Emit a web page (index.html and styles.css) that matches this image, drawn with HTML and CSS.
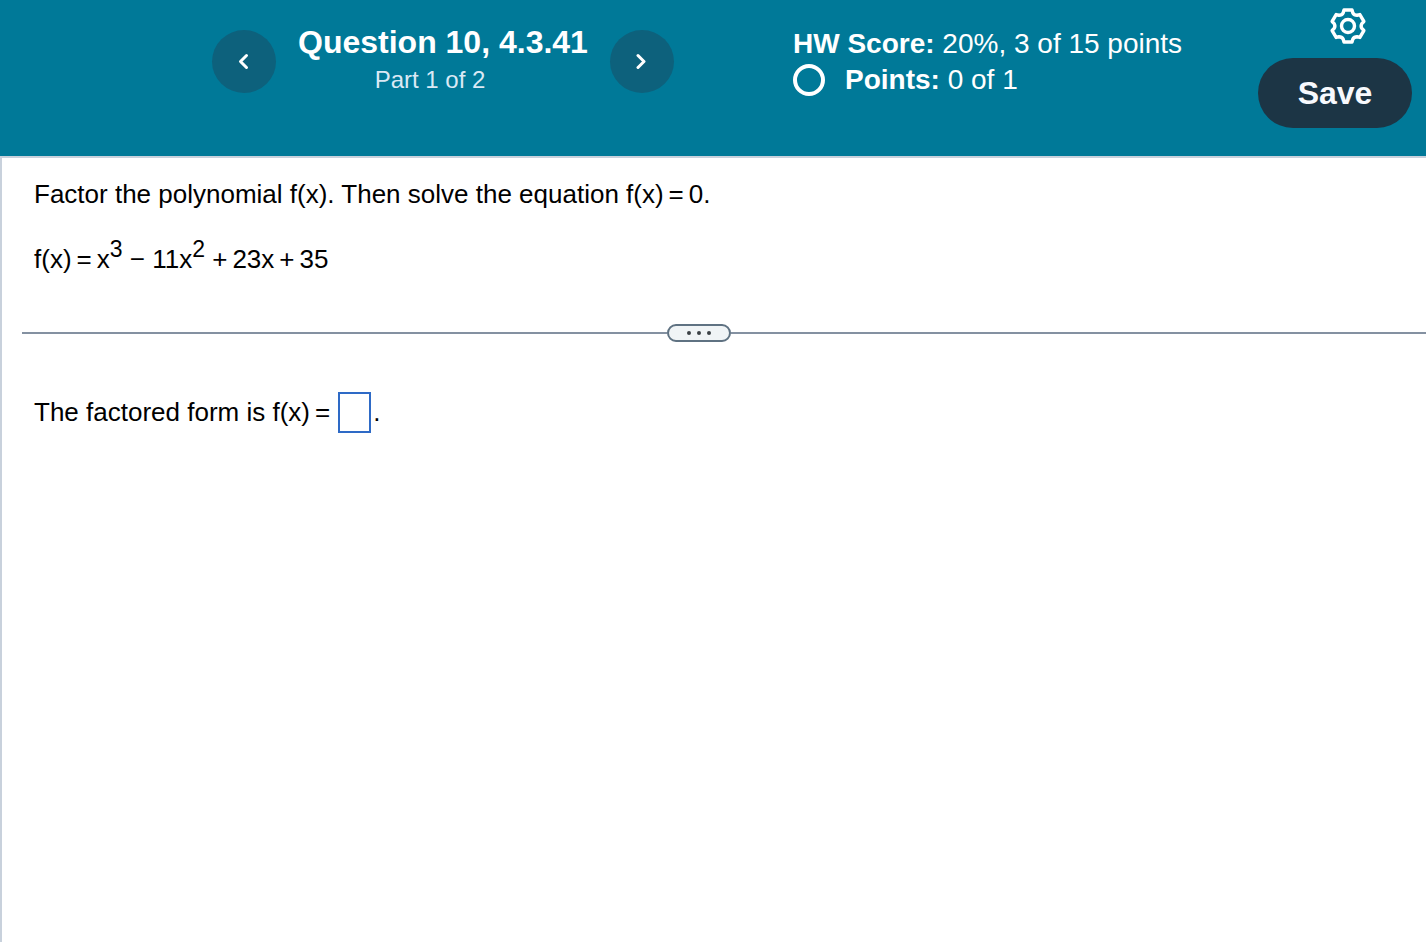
FILE: index.html
```
<!DOCTYPE html>
<html lang="en">
<head>
    <meta charset="UTF-8">
    <meta name="viewport" content="width=device-width, initial-scale=1.0">
    <title>Question 10, 4.3.41</title>
    <link rel="stylesheet" href="styles.css">
</head>
<body>
    <!-- Top bar -->
    <header class="header">
        <nav class="question-nav">
            <button type="button" class="nav-button" aria-label="Previous question">
                <svg width="12" height="18" viewBox="0 0 12 18"><path d="M8.5 2.5L2.5 8.5L8.5 14.5"/></svg>
            </button>
            <div class="question-title">
                <h1>Question 10, 4.3.41</h1>
                <p>Part 1 of 2</p>
            </div>
            <button type="button" class="nav-button" aria-label="Next question">
                <svg width="12" height="18" viewBox="0 0 12 18"><path d="M2 2.5L8 8.5L2 14.5"/></svg>
            </button>
        </nav>

        <div class="score">
            <p><strong>HW Score:</strong> 20%, 3 of 15 points</p>
            <p class="points"><span class="points-status"></span><span><strong>Points:</strong> 0 of 1</span></p>
        </div>

        <div class="actions">
            <button type="button" class="settings-button" aria-label="Settings">
                <svg width="36" height="36" viewBox="-18 -18 36 36">
                    <path d="M-4 -16H4L4.8 -13.2Q6.2 -10.74 9.03 -10.76L11.86 -11.46L15.86 -4.54L13.83 -2.44Q12.4 0 13.83 2.44L15.86 4.54L11.86 11.46L9.03 10.76Q6.2 10.74 4.8 13.2L4 16H-4L-4.8 13.2Q-6.2 10.74 -9.03 10.76L-11.86 11.46L-15.86 4.54L-13.83 2.44Q-12.4 0 -13.83 -2.44L-15.86 -4.54L-11.86 -11.46L-9.03 -10.76Q-6.2 -10.74 -4.8 -13.2Z"/>
                    <circle r="6.5"/>
                </svg>
            </button>
            <button type="button" class="save-button">Save</button>
        </div>
    </header>

    <!-- Exercise -->
    <main class="exercise">
        <section class="problem">
            <p>Factor the polynomial f(x). Then solve the equation f(x)<span class="op">=</span>0.</p>
            <p>f(x)<span class="op">=</span>x<sup>3</sup> − 11x<sup>2</sup> <span class="plus">+</span>23x<span class="op">+</span>35</p>
        </section>

        <div class="divider">
            <button type="button" class="divider-handle" aria-label="Resize">
                <svg width="26" height="6" viewBox="0 0 26 6">
                    <circle cx="3" cy="3" r="2"/>
                    <circle cx="13" cy="3" r="2"/>
                    <circle cx="23" cy="3" r="2"/>
                </svg>
            </button>
        </div>

        <form class="answer">
            <label for="answer">The factored form is f(x)<span class="op">=</span></label>
            <input type="text" id="answer" autocomplete="off">
            <span>.</span>
        </form>
    </main>
</body>
</html>
```
FILE: styles.css
```
* {
    box-sizing: border-box;
}

body {
    margin: 0;
    min-height: 100vh;
    display: flex;
    flex-direction: column;
    font-family: "Liberation Sans", Arial, sans-serif;
    font-size: 26px;
    color: #000;
    background-color: #fff;
}

h1, p {
    margin: 0;
}

button {
    border: none;
    padding: 0;
    font-family: inherit;
    cursor: pointer;
}

/* Top bar */
.header {
    display: flex;
    align-items: flex-start;
    min-height: 158px;
    padding-left: 212px;
    padding-right: 14px;
    background-color: #007998;
    border-bottom: 2px solid #c8d1dc;
    color: #fff;
}

.question-nav {
    display: flex;
    padding-top: 22px;
}

.nav-button {
    display: flex;
    align-items: center;
    justify-content: center;
    width: 64px;
    height: 63px;
    margin-top: 8px;
    border-radius: 50%;
    background-color: #0d617c;
}

.nav-button svg {
    fill: none;
    stroke: #fff;
    stroke-width: 3;
    stroke-linecap: round;
    stroke-linejoin: round;
}

.question-title {
    width: 334px;
    padding-left: 22px;
    white-space: nowrap;
}

.question-title h1 {
    font-size: 32px;
    line-height: 40px;
}

.question-title p {
    padding-right: 48px;
    font-size: 24px;
    line-height: 36px;
    text-align: center;
    color: #dbe9f5;
}

/* Score */
.score {
    padding-top: 26px;
    margin-left: 119px;
    font-size: 28px;
    line-height: 36px;
    white-space: nowrap;
}

.points {
    display: flex;
    align-items: center;
    gap: 20px;
}

.points-status {
    width: 32px;
    height: 32px;
    border: 4px solid #fff;
    border-radius: 50%;
}

/* Settings and save */
.actions {
    display: flex;
    flex-direction: column;
    align-items: center;
    gap: 14px;
    margin-left: auto;
    padding-top: 8px;
}

.settings-button {
    height: 36px;
    margin-left: 26px;
    background: none;
}

.settings-button svg {
    display: block;
    fill: none;
    stroke: #fff;
    stroke-width: 3.4;
    stroke-linejoin: round;
}

.save-button {
    width: 154px;
    height: 70px;
    border-radius: 35px;
    background-color: #1c3545;
    color: #f7f9fd;
    font-size: 32px;
    font-weight: bold;
}

/* Exercise */
.exercise {
    flex: 1;
    padding-left: 20px;
    border-left: 2px solid #c8d1dc;
}

.problem {
    padding: 18px 12px 0;
}

.problem p {
    line-height: 36px;
    margin-bottom: 29px;
}

.op {
    margin: 0 5px;
}

.plus {
    margin-right: 5px;
}

sup {
    font-size: 23px;
    line-height: 0;
    vertical-align: 11px;
}

/* Divider with the drag handle */
.divider {
    display: flex;
    align-items: center;
    margin-top: 47px;
}

.divider::before,
.divider::after {
    content: "";
    flex: 645;
    height: 2px;
    background-color: #8491a1;
}

.divider::after {
    flex: 695;
}

.divider-handle {
    display: flex;
    align-items: center;
    justify-content: center;
    width: 64px;
    height: 18px;
    border: 2px solid #5f7282;
    border-radius: 9px;
    background-color: #f0f4f6;
    fill: #3c4146;
}

/* Answer */
.answer {
    display: flex;
    align-items: center;
    padding: 50px 12px;
}

.answer input {
    width: 33px;
    height: 41px;
    margin-left: 3px;
    margin-right: 2px;
    padding: 0 4px;
    border: 2px solid #2e6ac6;
    font: inherit;
}
```
